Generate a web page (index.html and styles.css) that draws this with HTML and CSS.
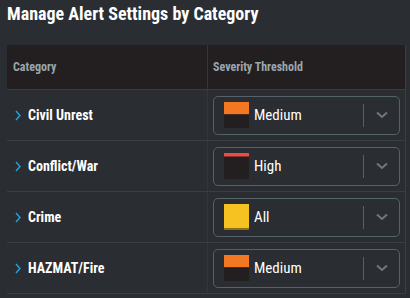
FILE: index.html
```html
<!DOCTYPE html>
<html lang="en">
<head>
  <meta charset="UTF-8">
  <meta name="viewport" content="width=device-width, initial-scale=1.0">
  <title>Alert Settings</title>
  <link rel="stylesheet" href="styles.css">
</head>
<body>
  <div class="panel">
    <h1>Manage Alert Settings by Category</h1>
    <div class="table">
      <div class="row head">
        <div class="cell cat">Category</div>
        <div class="cell sev">Severity Threshold</div>
      </div>

      <div class="row">
        <div class="cell cat">
          <svg class="arrow" width="6" height="11" viewBox="0 0 6 11"><path d="M1 1 L5 5.5 L1 10" fill="none" stroke="#27a3dc" stroke-width="1.4"/></svg>
          Civil Unrest
        </div>
        <div class="cell sev">
          <div class="select">
            <span class="swatch medium"></span>
            <span class="label">Medium</span>
            <span class="sep"></span>
            <svg class="caret" width="12" height="8" viewBox="0 0 12 8"><path d="M1 1.5 L6 6 L11 1.5" fill="none" stroke="#6d7880" stroke-width="2"/></svg>
          </div>
        </div>
      </div>

      <div class="row">
        <div class="cell cat">
          <svg class="arrow" width="6" height="11" viewBox="0 0 6 11"><path d="M1 1 L5 5.5 L1 10" fill="none" stroke="#27a3dc" stroke-width="1.4"/></svg>
          Conflict/War
        </div>
        <div class="cell sev">
          <div class="select">
            <span class="swatch high"></span>
            <span class="label">High</span>
            <span class="sep"></span>
            <svg class="caret" width="12" height="8" viewBox="0 0 12 8"><path d="M1 1.5 L6 6 L11 1.5" fill="none" stroke="#6d7880" stroke-width="2"/></svg>
          </div>
        </div>
      </div>

      <div class="row">
        <div class="cell cat">
          <svg class="arrow" width="6" height="11" viewBox="0 0 6 11"><path d="M1 1 L5 5.5 L1 10" fill="none" stroke="#27a3dc" stroke-width="1.4"/></svg>
          Crime
        </div>
        <div class="cell sev">
          <div class="select">
            <span class="swatch all"></span>
            <span class="label">All</span>
            <span class="sep"></span>
            <svg class="caret" width="12" height="8" viewBox="0 0 12 8"><path d="M1 1.5 L6 6 L11 1.5" fill="none" stroke="#6d7880" stroke-width="2"/></svg>
          </div>
        </div>
      </div>

      <div class="row">
        <div class="cell cat">
          <svg class="arrow" width="6" height="11" viewBox="0 0 6 11"><path d="M1 1 L5 5.5 L1 10" fill="none" stroke="#27a3dc" stroke-width="1.4"/></svg>
          HAZMAT/Fire
        </div>
        <div class="cell sev">
          <div class="select">
            <span class="swatch medium"></span>
            <span class="label">Medium</span>
            <span class="sep"></span>
            <svg class="caret" width="12" height="8" viewBox="0 0 12 8"><path d="M1 1.5 L6 6 L11 1.5" fill="none" stroke="#6d7880" stroke-width="2"/></svg>
          </div>
        </div>
      </div>
    </div>
  </div>
</body>
</html>
```

FILE: styles.css
```css
body {
  margin: 0;
  background-color: #2a2d31;
  font-family: 'Liberation Sans Narrow', 'Roboto Condensed', Roboto, sans-serif;
  color: #fff;
}
.panel {
  padding: 0 0 0 7px;
}
h1 {
  margin: 0;
  padding-top: 4px;
  height: 41px;
  font-size: 18px;
  font-weight: bold;
  line-height: 20px;
}
.table {
  border-right: 1px solid #3a3f44;
  margin-right: 4px;
}
.row {
  display: flex;
  height: 51px;
  border-bottom: 1px solid #3a3e42;
  box-sizing: border-box;
}
.row.head {
  height: 45px;
  background-color: #231f20;
}
.cell {
  display: flex;
  align-items: center;
}
.cat {
  width: 200px;
  box-sizing: border-box;
  padding-left: 8px;
  font-size: 14px;
  font-weight: bold;
}
.sev {
  flex: 1;
  padding: 0 5px 0 5px;
  border-left: 1px solid #33373b;
}
.head .cell {
  font-size: 12px;
  font-weight: bold;
  color: #9aa6ae;
}
.head .cat {
  padding-left: 6px;
}
.arrow {
  margin-right: 7px;
}
.select {
  display: flex;
  align-items: center;
  width: 100%;
  height: 39px;
  box-sizing: border-box;
  border: 1px solid #56626a;
  border-radius: 5px;
  padding: 0 11px 0 10px;
}
.swatch {
  width: 25px;
  height: 26px;
  margin-right: 5px;
  background-color: #231f20;
}
.swatch.medium {
  background: linear-gradient(#f47721 0, #f47721 12px, #6a3a1e 12px, #231f20 13px);
}
.swatch.high {
  background: linear-gradient(#ef4a45 0, #ef4a45 3px, #231f20 4px);
}
.swatch.all {
  background: linear-gradient(#f6c222 0, #f6c222 24px, #8c6f18 24px);
}
.label {
  flex: 1;
  font-size: 15px;
}
.sep {
  width: 1px;
  height: 23px;
  background-color: #56626a;
  margin-right: 12px;
}
```
